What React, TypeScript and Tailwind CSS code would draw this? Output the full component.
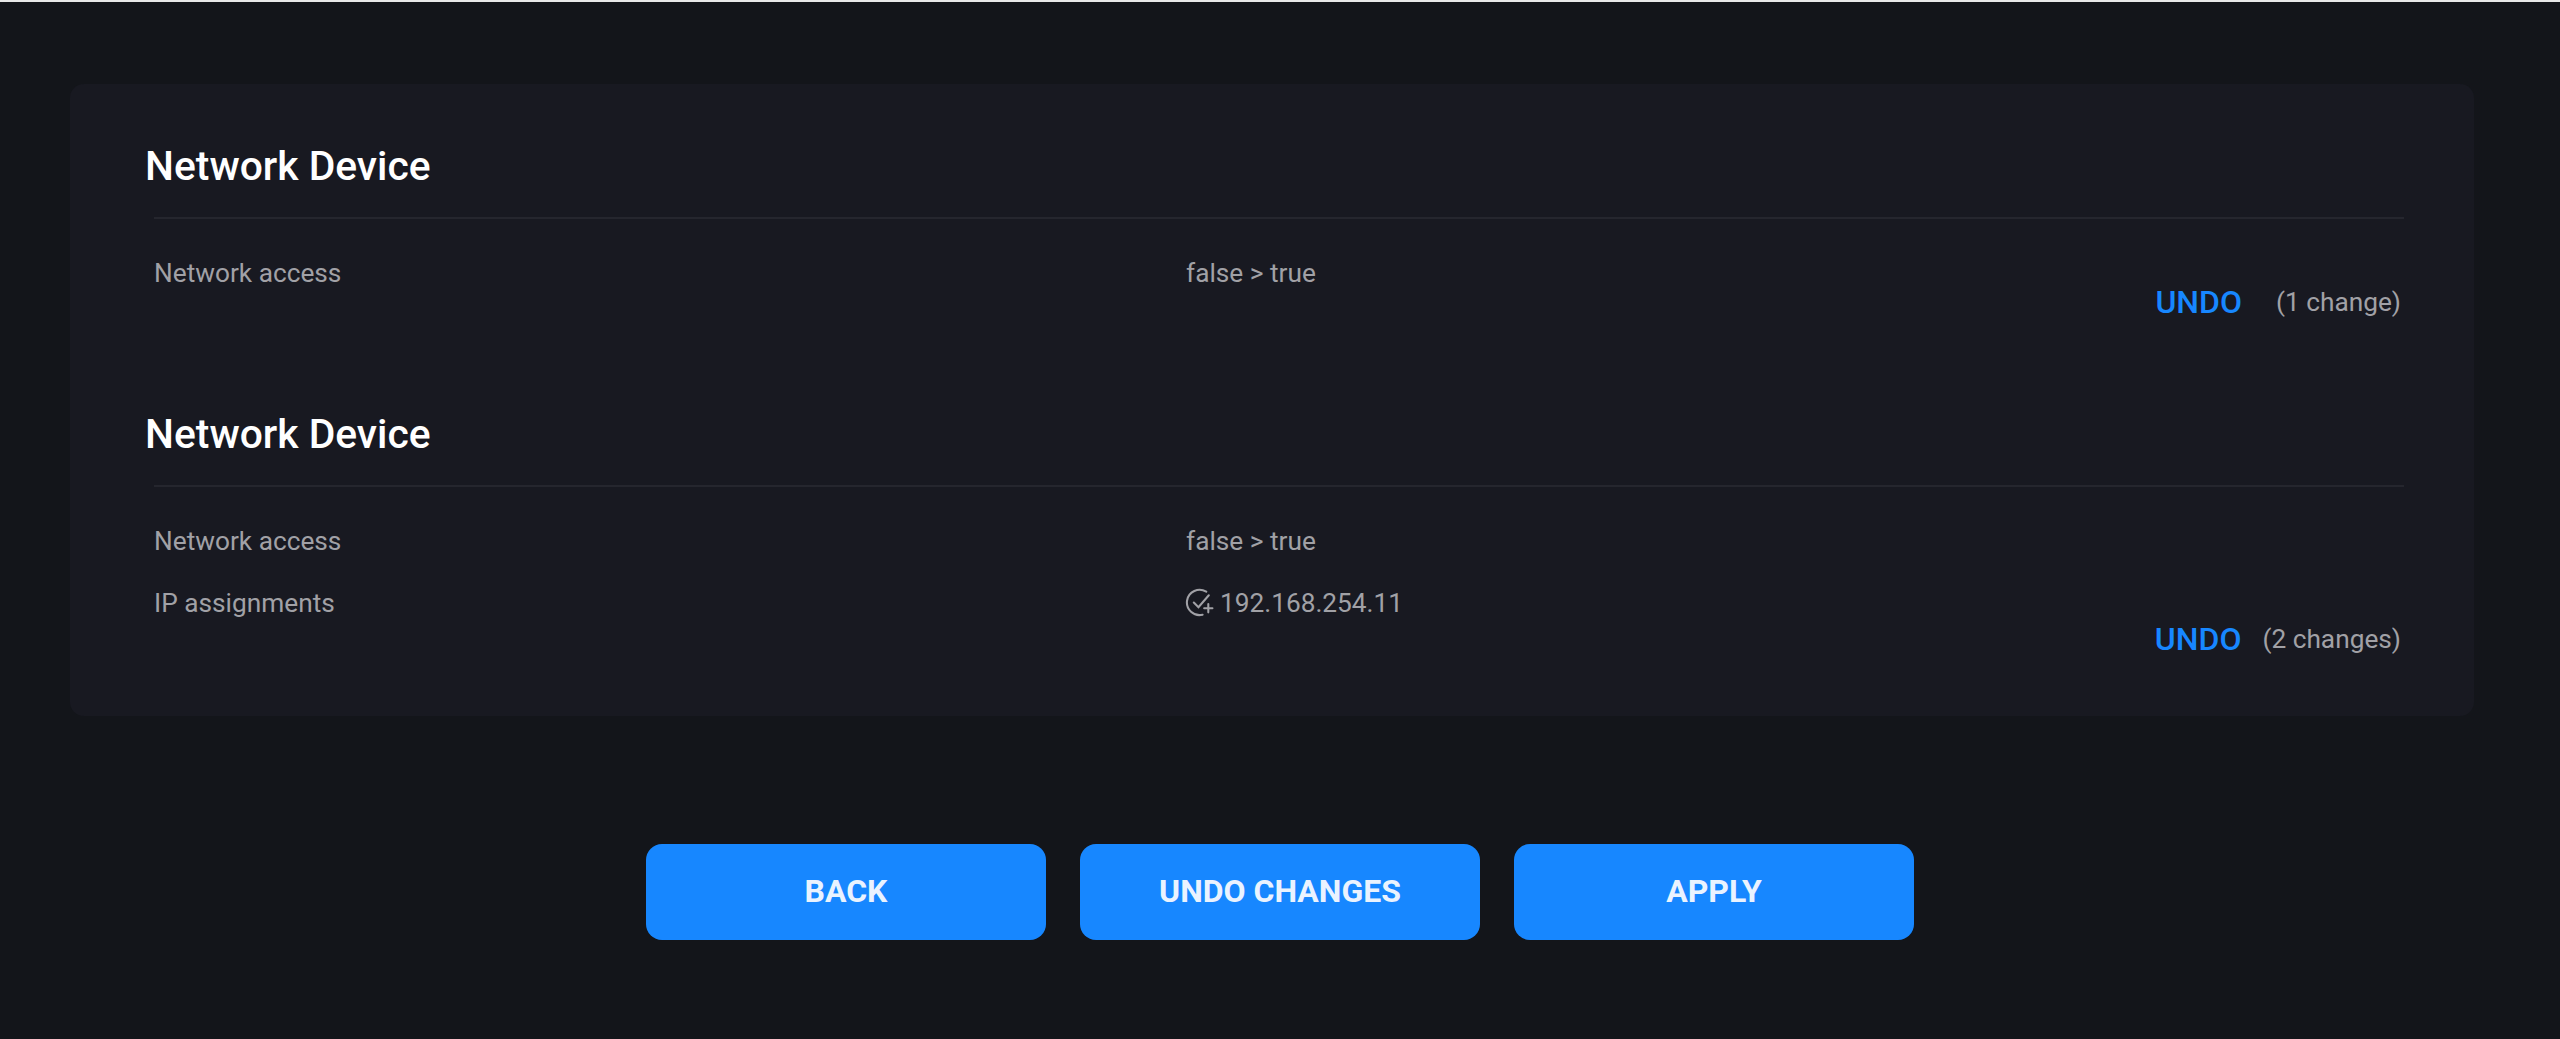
const groups = [
  {
    rows: [{ label: "Network access", value: "false > true", icon: false }],
    changes: "(1 change)",
  },
  {
    rows: [
      { label: "Network access", value: "false > true", icon: false },
      { label: "IP assignments", value: "192.168.254.11", icon: true },
    ],
    changes: "(2 changes)",
  },
];

function AddedIcon() {
  return (
    <svg viewBox="0 0 28 28" className="ml-[-1px] mr-[6px] mt-[-1px] h-[29px] w-[29px]" fill="none" stroke="#a1a1a6" strokeWidth="2" strokeLinecap="round">
      <path d="M20.5 3.6A12.2 12.2 0 1 0 17 25.8" />
      <path d="M8.5 14l4.5 4.5L23 7" />
      <path d="M22.5 15.5v8M18.5 19.5h8" />
    </svg>
  );
}

export default function App() {
  return (
    <div className="min-h-[1039px] border-t-2 border-[#e8e8e8] bg-[#13151a] font-['Roboto',sans-serif]">
      <div className="pl-[70px] pr-[86px] pt-[82px]">
        <div className="h-[632px] rounded-[14px] bg-[#181921] pl-[75px] pr-[70px] pt-[59px]">
          {groups.map((group, i) => (
            <section key={i} className={i === 0 ? "h-[268px]" : ""}>
              <h2 className="h-[74px] text-[40.8px] leading-[47px] font-medium text-white">Network Device</h2>
              <div className="ml-[9px] border-t-2 border-[#25262e] pt-[39px]">
                <div className="flex flex-col gap-[32px]">
                  {group.rows.map((row) => (
                    <div key={row.label} className="flex text-[26.25px] leading-[30px] text-[#a1a1a6]">
                      <div className="w-[1032px]">{row.label}</div>
                      <div className="flex items-center">
                        {row.icon && <AddedIcon />}
                        {row.value}
                      </div>
                    </div>
                  ))}
                </div>
                <div className={`flex items-center justify-end pr-[3px] ${i === 0 ? "mt-[-5px]" : "mt-[2px]"}`}>
                  <button className="text-[32px] leading-[38px] font-medium text-[#1787ff]">UNDO</button>
                  <span className={`text-[26.25px] leading-[30px] text-[#a1a1a6] ${i === 0 ? "ml-[34px]" : "ml-[21px]"}`}>{group.changes}</span>
                </div>
              </div>
            </section>
          ))}
        </div>
      </div>
      <div className="mt-[128px] flex justify-center gap-[34px]">
        {["BACK", "UNDO CHANGES", "APPLY"].map((label) => (
          <button key={label} className="h-[96px] w-[400px] rounded-[16px] bg-[#1787ff] pb-[2px] text-[32px] font-bold text-[#eaf3ff]">
            {label}
          </button>
        ))}
      </div>
    </div>
  );
}
